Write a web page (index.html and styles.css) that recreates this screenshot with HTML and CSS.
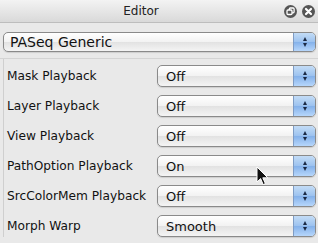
FILE: index.html
```html
<!DOCTYPE html>
<html lang="en">
<head>
    <meta charset="UTF-8">
    <title>Editor</title>
    <link rel="stylesheet" href="styles.css">
</head>
<body>
    <div class="window">
        <div class="titlebar">
            <span class="title">Editor</span>
            <div class="title-btns">
                <span class="tbtn">
                    <svg width="13" height="13" viewBox="0 0 13 13"><rect x="3" y="5" width="5" height="4.5" rx="1" fill="none" stroke="#fff" stroke-width="1.3"/><path d="M5.3 5V4a1 1 0 0 1 1-1h2.8a1 1 0 0 1 1 1v2.8a1 1 0 0 1-1 1H8" fill="none" stroke="#fff" stroke-width="1.3"/></svg>
                </span>
                <span class="tbtn">
                    <svg width="13" height="13" viewBox="0 0 13 13"><path d="M4 4l5 5M9 4l-5 5" stroke="#fff" stroke-width="2.2" stroke-linecap="round"/></svg>
                </span>
            </div>
        </div>

        <div class="preset">
            <div class="popup big">
                <span class="value">PASeq Generic</span>
                <span class="arrows"><i class="up"></i><i class="down"></i></span>
            </div>
        </div>

        <div class="params">
            <div class="row">
                <span class="label">Mask Playback</span>
                <div class="popup"><span class="value">Off</span><span class="arrows"><i class="up"></i><i class="down"></i></span></div>
            </div>
            <div class="row">
                <span class="label">Layer Playback</span>
                <div class="popup"><span class="value">Off</span><span class="arrows"><i class="up"></i><i class="down"></i></span></div>
            </div>
            <div class="row">
                <span class="label">View Playback</span>
                <div class="popup"><span class="value">Off</span><span class="arrows"><i class="up"></i><i class="down"></i></span></div>
            </div>
            <div class="row">
                <span class="label">PathOption Playback</span>
                <div class="popup"><span class="value">On</span><span class="arrows"><i class="up"></i><i class="down"></i></span></div>
            </div>
            <div class="row">
                <span class="label">SrcColorMem Playback</span>
                <div class="popup"><span class="value">Off</span><span class="arrows"><i class="up"></i><i class="down"></i></span></div>
            </div>
            <div class="row">
                <span class="label">Morph Warp</span>
                <div class="popup"><span class="value">Smooth</span><span class="arrows"><i class="up"></i><i class="down"></i></span></div>
            </div>
        </div>

        <svg class="cursor" width="14" height="20" viewBox="0 0 14 20"><path d="M1 1v15l3.6-3.4 2.6 6 2.2-1-2.6-5.8h5z" fill="#111" stroke="#fff" stroke-width="1"/></svg>
    </div>
</body>
</html>
```

FILE: styles.css
```css
body {
    margin: 0;
    background: #e9e9e9;
    font-family: "DejaVu Sans", "Liberation Sans", sans-serif;
    color: #111;
}
.window {
    position: relative;
    width: 318px;
    height: 243px;
    overflow: hidden;
    background: #e9e9e9;
}
.titlebar {
    height: 23px;
    display: flex;
    align-items: center;
    justify-content: center;
    background: linear-gradient(#f3f3f3, #d9d9d9);
    border-bottom: 1px solid #bdbdbd;
    box-sizing: border-box;
    position: relative;
}
.title {
    font-size: 12px;
    color: #222;
    margin-left: -36px;
}
.title-btns {
    position: absolute;
    right: 3px;
    top: 5px;
    display: flex;
    gap: 5px;
}
.tbtn {
    width: 13px;
    height: 13px;
    border-radius: 50%;
    background: #555;
    display: flex;
}
.preset {
    padding: 9px 2px 6px 3px;
    border-bottom: 1px solid #d4d4d4;
}
.popup {
    display: flex;
    align-items: center;
    height: 22px;
    box-sizing: border-box;
    border: 1px solid #8a8a8a;
    border-radius: 5px;
    background: linear-gradient(#ffffff, #f2f2f2 50%, #e2e2e2 51%, #f4f4f4);
    box-shadow: 0 1px 1px rgba(0,0,0,0.12);
    overflow: hidden;
}
.popup .value {
    flex: 1;
    padding-left: 8px;
    font-size: 13px;
}
.popup.big {
    height: 20px;
}
.popup.big .value {
    font-size: 14px;
    padding-left: 6px;
}
.arrows {
    width: 21px;
    align-self: stretch;
    border-left: 1px solid #7f9cc4;
    background: linear-gradient(#c3dcf6, #9cc2ef 50%, #84b1ea 51%, #b6d6fb);
    display: flex;
    flex-direction: column;
    align-items: center;
    justify-content: center;
    gap: 2px;
}
.arrows i {
    width: 0;
    height: 0;
    border-left: 2.5px solid transparent;
    border-right: 2.5px solid transparent;
}
.arrows .up { border-bottom: 4px solid #1b2a44; }
.arrows .down { border-top: 4px solid #1b2a44; }
.params {
    margin-left: 3px;
    border-left: 1px solid #cfcfcf;
    padding: 6px 2px 0 3px;
    display: flex;
    flex-direction: column;
    gap: 8px;
}
.row {
    display: grid;
    grid-template-columns: 150px 1fr;
    align-items: center;
}
.label {
    font-size: 12.2px;
}
.cursor {
    position: absolute;
    left: 256px;
    top: 166px;
}
```
